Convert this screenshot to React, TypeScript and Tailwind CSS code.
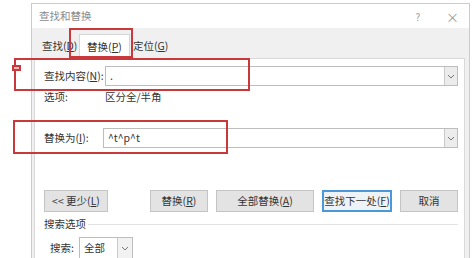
const font = { fontFamily: '"Noto Sans CJK SC", "Noto Sans", "Liberation Sans", sans-serif' };

function Chevron() {
  return (
    <svg width="8" height="5" viewBox="0 0 8 5" fill="none">
      <path d="M1 1l3 3 3-3" stroke="#777" strokeWidth="1" />
    </svg>
  );
}

function Combo({ value, className = "" }: { value: string; className?: string }) {
  return (
    <div className={`flex h-[20px] items-stretch border border-[#bdbdbd] bg-white ${className}`}>
      <div className="flex flex-1 items-center pl-[4px] text-[10.5px] text-[#333]">{value}</div>
      <div className="flex w-[13px] items-center justify-center border-l border-[#c8c8c8] bg-[#ececec]">
        <Chevron />
      </div>
    </div>
  );
}

function Btn({
  children,
  className = "",
  primary = false,
}: {
  children: React.ReactNode;
  className?: string;
  primary?: boolean;
}) {
  return (
    <div
      className={`flex h-[22px] items-center justify-center text-[10.5px] text-[#333] ${
        primary ? "border-2 border-[#4a98d8] bg-[#eef3f8]" : "border border-[#c4c4c4] bg-[#e3e3e3]"
      } ${className}`}
    >
      {children}
    </div>
  );
}

export default function App() {
  return (
    <div className="relative h-[258px] w-[474px] overflow-hidden bg-white" style={font}>
      <div className="ml-[31px] mt-[3px] flex h-[260px] w-[439px] flex-col border-x border-t border-[#cbcbcb] bg-[#f0f0f0]">
        {/* title bar */}
        <div className="flex h-[24px] shrink-0 items-center bg-white pl-[7px] text-[10.5px] text-[#8a8a8a]">
          <span>查找和替换</span>
          <span className="ml-auto w-[12px] text-center text-[10px] text-[#999]">?</span>
          <span className="ml-[22px] mr-[10px] text-[13px] leading-none text-[#999]">×</span>
        </div>

        {/* tabs */}
        <div className="flex h-[30px] shrink-0 items-end pl-[10px] text-[10.5px] text-[#333]">
          <div className="flex h-[24px] w-[37px] items-center">
            查找(<u>D</u>)
          </div>
          <div className="-mb-px flex h-[25px] w-[51px] items-center justify-center border-x border-t border-[#d6d6d6] bg-white">
            替换(<u>P</u>)
          </div>
          <div className="flex h-[24px] items-center pl-[3px]">
            定位(<u>G</u>)
          </div>
        </div>

        {/* panel */}
        <div className="ml-[2px] mr-[4px] flex-1 border-x border-t border-[#d9d9d9] bg-white pl-[9px] text-[10.5px] text-[#333]">
          <div className="mt-[7px] flex h-[20px] items-center">
            <div className="w-[61px]">
              查找内容(<u>N</u>):
            </div>
            <Combo value="." className="w-[353px]" />
          </div>
          <div className="mt-[1px] flex h-[20px] items-center">
            <div className="w-[61px]">选项:</div>
            <div>区分全/半角</div>
          </div>
          <div className="mt-[21px] flex h-[20px] items-center">
            <div className="w-[59px]">
              替换为(<u>I</u>):
            </div>
            <Combo value="^t^p^t" className="w-[355px]" />
          </div>

          <div className="mt-[42px] flex">
            <Btn className="w-[64px]">
              &lt;&lt; 更少(<u>L</u>)
            </Btn>
            <Btn className="ml-[42px] w-[58px]">
              替换(<u>R</u>)
            </Btn>
            <Btn className="ml-[8px] w-[98px]">
              全部替换(<u>A</u>)
            </Btn>
            <Btn primary className="ml-[8px] w-[70px]">
              查找下一处(<u>F</u>)
            </Btn>
            <Btn className="ml-[8px] w-[58px]">取消</Btn>
          </div>

          <div className="mt-[5px] flex h-[14px] items-center">
            <span>搜索选项</span>
            <div className="ml-[2px] mr-[6px] h-px flex-1 bg-[#e2e2e2]" />
          </div>

          <div className="mt-[6px] flex items-center">
            <span className="ml-[6px] w-[29px]">搜索:</span>
            <div className="flex h-[22px] w-[54px] items-stretch border border-[#bdbdbd] bg-white">
              <div className="flex flex-1 items-center pl-[4px]">全部</div>
              <div className="flex w-[15px] items-center justify-center border-l border-[#c8c8c8] bg-[#f2f2f2]">
                <Chevron />
              </div>
            </div>
          </div>
        </div>
      </div>

      {/* red annotation boxes */}
      <div className="absolute left-[69px] top-[28px] h-[30px] w-[64px] border-2 border-[#c9393c]" />
      <div className="absolute left-[14px] top-[58px] h-[33px] w-[236px] border-2 border-[#c9393c]" />
      <div className="absolute left-[13px] top-[120px] h-[34px] w-[215px] border-2 border-[#c9393c]" />
      <div className="absolute left-[12px] top-[65px] h-[6px] w-[9px] border-2 border-[#c9393c] bg-[#f3b6b8]" />
    </div>
  );
}
